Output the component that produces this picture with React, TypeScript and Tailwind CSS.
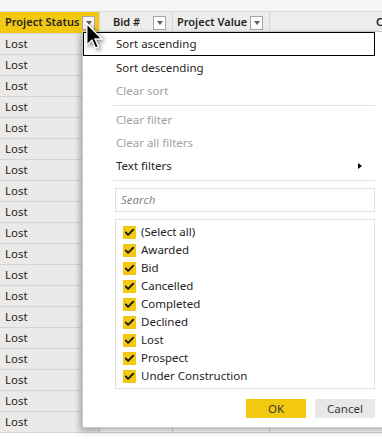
import { Check } from "lucide-react";

const font = { fontFamily: '"Segoe UI", "Noto Sans", sans-serif' };

const statuses = [
  "(Select all)",
  "Awarded",
  "Bid",
  "Cancelled",
  "Completed",
  "Declined",
  "Lost",
  "Prospect",
  "Under Construction",
];

function DropBtn({ light }: { light?: boolean }) {
  return (
    <div
      className={`flex h-[14px] w-[13px] shrink-0 items-center justify-center border border-[#a6a6a6] ${
        light ? "bg-[#f4f4f4]" : "bg-white"
      }`}
    >
      <div className="h-0 w-0 border-x-[3.5px] border-t-[4px] border-x-transparent border-t-[#605e5c]" />
    </div>
  );
}

function Cursor() {
  return (
    <svg
      className="absolute left-[86px] top-[23px] drop-shadow-[2px_2px_2px_rgba(0,0,0,0.45)]"
      width="17"
      height="26"
      viewBox="0 0 12.5 19.5"
    >
      <path
        d="M0.5 0.5 L0.5 16.5 L4.3 12.8 L7 18.8 L9.2 17.8 L6.6 12 L11.8 12 Z"
        fill="#000"
        stroke="#fff"
        strokeWidth="1"
        strokeLinejoin="miter"
      />
    </svg>
  );
}

function MenuItem({ label, muted, active, arrow }: { label: string; muted?: boolean; active?: boolean; arrow?: boolean }) {
  return (
    <div
      className={`flex items-center pl-[32px] pr-[12px] text-[11.5px] ${
        active ? "h-[24px] border border-black" : "h-[23px] border border-transparent"
      } ${muted ? "text-[#a19f9d]" : "text-[#252423]"}`}
    >
      <span className="flex-1">{label}</span>
      {arrow && (
        <div className="h-0 w-0 border-y-[3.5px] border-l-[4px] border-y-transparent border-l-black" />
      )}
    </div>
  );
}

export default function App() {
  const rows = Array.from({ length: 19 });

  return (
    <div className="relative h-[439px] w-[382px] overflow-hidden bg-white" style={font}>
      {/* table */}
      <div className="h-[12px] border-b border-[#dadada] bg-[#f6f6f6]" />
      <div className="flex h-[22px] whitespace-nowrap border-b border-[#d6d6d6] bg-[#eeedec] text-[11px] font-semibold text-[#252423]">
        <div className="flex w-[100px] shrink-0 items-center justify-between border-r border-[#d6d6d6] bg-[#f2c811] pl-[5px] pr-[4px]">
          <span>Project Status</span>
          <DropBtn light />
        </div>
        <div className="flex w-[73px] shrink-0 items-center justify-between border-r border-[#d6d6d6] pl-[13px] pr-[6px]">
          <span>Bid #</span>
          <DropBtn />
        </div>
        <div className="flex w-[97px] shrink-0 items-center justify-between border-r border-[#d6d6d6] pl-[4px] pr-[6px]">
          <span>Project Value</span>
          <DropBtn />
        </div>
        <div className="flex shrink-0 items-center pl-[106px] text-[#252423]">
          <span>Client</span>
        </div>
      </div>
      {rows.map((_, i) => (
        <div key={i} className="flex h-[21px] border-b border-[#d4d4d4] text-[11.5px] text-[#252423]">
          <div className="flex w-[100px] shrink-0 items-center border-r border-[#d6d6d6] bg-[#ebeae8] pl-[5px]">Lost</div>
          <div className="w-[73px] shrink-0 border-r border-[#d6d6d6]" />
          <div className="w-[97px] shrink-0 border-r border-[#d6d6d6]" />
          <div className="flex-1" />
        </div>
      ))}

      {/* filter menu */}
      <div className="absolute left-[82px] top-[31px] flex h-[397px] w-[310px] flex-col border border-[#c8c8c8] bg-white pr-[16px] shadow-[-2px_3px_6px_rgba(0,0,0,0.3)]">
        <MenuItem label="Sort ascending" active />
        <MenuItem label="Sort descending" />
        <MenuItem label="Clear sort" muted />
        <div className="ml-[30px] mb-[2px] mt-[3px] h-px bg-[#e1e1e1]" />
        <MenuItem label="Clear filter" muted />
        <MenuItem label="Clear all filters" muted />
        <MenuItem label="Text filters" arrow />
        <div className="ml-[30px] mt-[3px] h-px bg-[#e1e1e1]" />

        <div className="ml-[32px] mt-[7px] flex h-[24px] items-center border border-[#e1e1e1] pl-[5px] text-[11.5px] italic text-[#8a8886]">
          Search
        </div>

        <div className="ml-[32px] mt-[7px] flex flex-col border border-[#e1e1e1] py-[3px] pl-[7px]">
          {statuses.map((s) => (
            <div key={s} className="flex h-[18px] items-center gap-[5px] text-[11.5px] text-[#252423]">
              <div className="flex h-[13px] w-[13px] items-center justify-center bg-[#f2c811]">
                <Check size={11} strokeWidth={4} color="#1b1a19" />
              </div>
              <span>{s}</span>
            </div>
          ))}
        </div>

        <div className="ml-[32px] mt-[10px] flex justify-end gap-[9px] text-[11.5px]">
          <div className="flex h-[19px] w-[60px] items-center justify-center bg-[#f2c811] text-[#3b3a39]">OK</div>
          <div className="flex h-[19px] w-[60px] items-center justify-center bg-[#e8e8e8] text-[#3b3a39]">Cancel</div>
        </div>
      </div>

      <Cursor />
    </div>
  );
}
